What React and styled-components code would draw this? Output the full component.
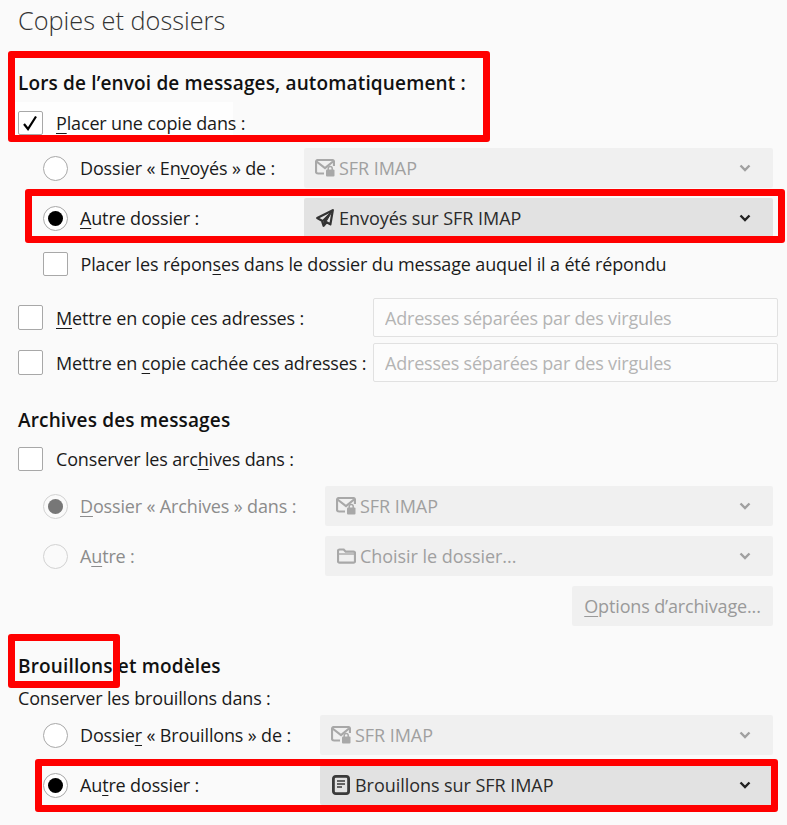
import React from 'react'
import styled, {createGlobalStyle} from 'styled-components'

const GlobalStyle = createGlobalStyle`
  html, body {
    margin: 0;
    padding: 0;
    background: #fafafa;
  }
  body {
    font-family: "Open Sans", "Noto Sans", "Liberation Sans", sans-serif;
    color: #1a1a1a;
  }
`

const Page = styled.div`
  position: relative;
  width: 787px;
  height: 825px;
  overflow: hidden;
  box-sizing: border-box;
  padding: 0 9px 0 18px;
  background: #fafafa;
  font-size: 18px;
  letter-spacing: -0.15px;
`

const Title = styled.h1`
  margin: 0;
  height: 42px;
  line-height: 41px;
  font-size: 25.3px;
  font-weight: 300;
  color: #333;
  letter-spacing: 0;
`

const Heading = styled.h2`
  margin: ${p => p.$top}px 0 0;
  height: 24px;
  line-height: 24px;
  font-size: 19px;
  font-weight: 600;
  letter-spacing: 0.15px;
  color: #111;
`

const CheckRow = styled.div`
  display: flex;
  align-items: center;
  gap: ${p => p.$gap || 13.5}px;
  height: 24px;
  white-space: nowrap;
  margin: ${p => p.$top}px 0 0 ${p => p.$left || 0}px;
`

const PatchRow = styled(CheckRow)`
  width: 218px;
  height: 33px;
  box-sizing: border-box;
  margin-left: -3px;
  padding: 9px 0 0 3px;
  background: #fefefe;
`

const Box = styled.span`
  flex: none;
  display: flex;
  align-items: center;
  justify-content: center;
  width: 24.5px;
  height: 24.5px;
  box-sizing: border-box;
  border: 1px solid #a8a8a8;
  border-radius: 2px;
  background: #fff;
`

const RadioGroup = styled.div`
  display: flex;
  flex-direction: column;
  gap: 10px;
  margin: ${p => p.$top}px 5px 0 25px;
`

const RadioRow = styled.div`
  display: grid;
  grid-template-columns: ${p => p.$labelWidth}px 1fr;
  align-items: center;
  height: 40px;
`

const RadioLabel = styled.label`
  display: flex;
  align-items: center;
  gap: 12px;
  color: ${p => (p.$disabled ? '#8c8c8c' : '#1a1a1a')};
  white-space: nowrap;
`

const Radio = styled.span`
  flex: none;
  display: flex;
  align-items: center;
  justify-content: center;
  width: 25px;
  height: 25px;
  box-sizing: border-box;
  border: 1px solid ${p => (p.$disabled ? '#d2d2d2' : '#a8a8a8')};
  border-radius: 50%;
  background: ${p => (p.$disabled ? '#fafafa' : '#fff')};
  &::after {
    content: '';
    display: ${p => (p.$checked ? 'block' : 'none')};
    width: 15px;
    height: 15px;
    border-radius: 50%;
    background: ${p => (p.$disabled ? '#777' : '#000')};
  }
`

const Select = styled.div`
  display: flex;
  align-items: center;
  gap: 4px;
  height: 40px;
  box-sizing: border-box;
  padding: 0 22px 0 11px;
  border-radius: 2px;
  background: ${p => (p.$disabled ? '#f0f0f0' : '#e2e2e2')};
  color: ${p => (p.$disabled ? '#a0a0a0' : '#2b2b2b')};
  letter-spacing: -0.05px;
`

const IconSlot = styled.span`
  flex: none;
  display: flex;
  align-items: center;
  justify-content: center;
  width: 20px;
`

const SelectText = styled.span`
  flex: 1;
  white-space: nowrap;
`

const AddressGrid = styled.div`
  display: grid;
  grid-template-columns: 355px 1fr;
  row-gap: 6px;
  margin-top: 22px;
`

const AddressLabel = styled(CheckRow)`
  align-self: center;
  margin: 0;
`

const AddressInput = styled.input`
  height: 39px;
  width: 100%;
  box-sizing: border-box;
  padding: 0 11px;
  border: 1px solid #e1e1e1;
  border-radius: 2px;
  background: #fcfcfc;
  font: inherit;
  letter-spacing: -0.2px;
  outline: none;
  &::placeholder {
    color: #b4b4b4;
    opacity: 1;
  }
`

const ButtonRow = styled.div`
  display: flex;
  justify-content: flex-end;
  margin: 10px 5px 0 0;
`

const OptionsButton = styled.button`
  width: 201px;
  height: 40px;
  padding: 0;
  border: 0;
  border-radius: 2px;
  background: #f0f0f0;
  color: #9a9a9a;
  font: inherit;
  letter-spacing: inherit;
`

const Plain = styled.div`
  height: 24px;
  line-height: 24px;
  margin-top: ${p => p.$top}px;
`

const Key = styled.u`
  text-decoration-thickness: 1px;
  text-underline-offset: 3px;
`

const Annotation = styled.div`
  position: absolute;
  left: ${p => p.$x}px;
  top: ${p => p.$y}px;
  width: ${p => p.$w}px;
  height: ${p => p.$h}px;
  box-sizing: border-box;
  border: 7px solid #f00;
  border-radius: 3px;
  pointer-events: none;
`

const CheckIcon = () => (
  <svg width="18" height="18" viewBox="0 0 18 18" fill="none" stroke="#000" strokeWidth="2.2">
    <path d="M3 10l4 5L15 2.5" />
  </svg>
)

const Chevron = ({color}) => (
  <svg width="12" height="8" viewBox="0 0 12 8" fill="none" stroke={color} strokeWidth="2.4">
    <path d="M1.5 1.5L6 6l4.5-4.5" />
  </svg>
)

const MailLockIcon = () => (
  <svg width="20" height="18" viewBox="0 0 20 18" fill="none" stroke="#a8a8a8" strokeWidth="2.2">
    <path d="M9 14.5H3a2 2 0 0 1-2-2V3a2 2 0 0 1 2-2h14a2 2 0 0 1 2 2v4" />
    <path d="M1.5 2.5L10 9l8-6.5" />
    <rect x="11" y="10.5" width="8.5" height="7" rx="1" fill="#a8a8a8" stroke="none" />
    <path d="M13.2 11V9.5a2 2 0 0 1 4 0V11" strokeWidth="1.5" />
  </svg>
)

const PlaneIcon = () => (
  <svg width="18" height="18" viewBox="0 0 18 18" fill="none" stroke="#333" strokeWidth="2.2" strokeLinejoin="round">
    <path d="M16.8 1.2L1.2 9l4.8 2.8 1.6 5 3-3.6 3.8 2.2z" />
    <path d="M6 11.8L16.8 1.2 7.6 16.8 8 12z" fill="#333" strokeWidth="1" />
  </svg>
)

const FolderIcon = () => (
  <svg width="19" height="16" viewBox="0 0 19 16" fill="none" stroke="#a8a8a8" strokeWidth="2.2">
    <path d="M2.5 1.5h4.2l2 2.2h7.8a1.5 1.5 0 0 1 1.5 1.5v8a1.5 1.5 0 0 1-1.5 1.5h-14A1.5 1.5 0 0 1 1 13.2V3a1.5 1.5 0 0 1 1.5-1.5z" />
    <path d="M1 6h17" strokeWidth="1.4" />
  </svg>
)

const DraftIcon = () => (
  <svg width="18" height="20" viewBox="0 0 18 20" fill="none" stroke="#3a3a3a">
    <rect x="1.4" y="1.4" width="15.2" height="17.2" rx="2.4" strokeWidth="2.8" />
    <path d="M5 6h8M5 9h8M5 12h5" strokeWidth="1.6" />
  </svg>
)

const CopyRadio = ({checked, disabled, labelWidth, label, icon, value}) => (
  <RadioRow $labelWidth={labelWidth}>
    <RadioLabel $disabled={disabled}>
      <Radio $checked={checked} $disabled={disabled} />
      <span>{label}</span>
    </RadioLabel>
    <Select $disabled={!checked || disabled}>
      <IconSlot>{icon}</IconSlot>
      <SelectText>{value}</SelectText>
      <Chevron color={!checked || disabled ? '#a0a0a0' : '#222'} />
    </Select>
  </RadioRow>
)

export default function App () {
  return (
    <Page>
      <GlobalStyle />
      <Title>Copies et dossiers</Title>

      <Heading $top={29}>Lors de l’envoi de messages, automatiquement :</Heading>
      <PatchRow $top={7}>
        <Box><CheckIcon /></Box>
        <span><Key>P</Key>lacer une copie dans :</span>
      </PatchRow>
      <RadioGroup $top={13}>
        <CopyRadio labelWidth={261} label={<>Dossier « En<Key>v</Key>oyés » de :</>} icon={<MailLockIcon />} value="SFR IMAP" />
        <CopyRadio checked labelWidth={261} label={<><Key>A</Key>utre dossier :</>} icon={<PlaneIcon />} value="Envoyés sur SFR IMAP" />
      </RadioGroup>
      <CheckRow $top={14} $left={25} $gap={13}>
        <Box />
        <span>Placer les répon<Key>s</Key>es dans le dossier du message auquel il a été répondu</span>
      </CheckRow>

      <AddressGrid>
        <AddressLabel>
          <Box />
          <span><Key>M</Key>ettre en copie ces adresses :</span>
        </AddressLabel>
        <AddressInput placeholder="Adresses séparées par des virgules" />
        <AddressLabel>
          <Box />
          <span>Mettre en <Key>c</Key>opie cachée ces adresses :</span>
        </AddressLabel>
        <AddressInput placeholder="Adresses séparées par des virgules" />
      </AddressGrid>

      <Heading $top={26}>Archives des messages</Heading>
      <CheckRow $top={15}>
        <Box />
        <span>Conserver les arc<Key>h</Key>ives dans :</span>
      </CheckRow>
      <RadioGroup $top={15}>
        <CopyRadio checked disabled labelWidth={282} label={<><Key>D</Key>ossier « Archives » dans :</>} icon={<MailLockIcon />} value="SFR IMAP" />
        <CopyRadio disabled labelWidth={282} label={<>A<Key>u</Key>tre :</>} icon={<FolderIcon />} value="Choisir le dossier..." />
      </RadioGroup>
      <ButtonRow>
        <OptionsButton><Key>O</Key>ptions d’archivage...</OptionsButton>
      </ButtonRow>

      <Heading $top={28}>Brouillons et modèles</Heading>
      <Plain $top={8}>Conserver les brouillons dans :</Plain>
      <RadioGroup $top={5}>
        <CopyRadio labelWidth={277} label={<>Dossie<Key>r</Key> « Brouillons » de :</>} icon={<MailLockIcon />} value="SFR IMAP" />
        <CopyRadio checked labelWidth={277} label={<>Au<Key>t</Key>re dossier :</>} icon={<DraftIcon />} value="Brouillons sur SFR IMAP" />
      </RadioGroup>

      <Annotation $x={8} $y={51} $w={482} $h={91} />
      <Annotation $x={25} $y={189} $w={760} $h={54} />
      <Annotation $x={8} $y={634} $w={112} $h={54} />
      <Annotation $x={35} $y={759} $w={743} $h={53} />
    </Page>
  )
}
